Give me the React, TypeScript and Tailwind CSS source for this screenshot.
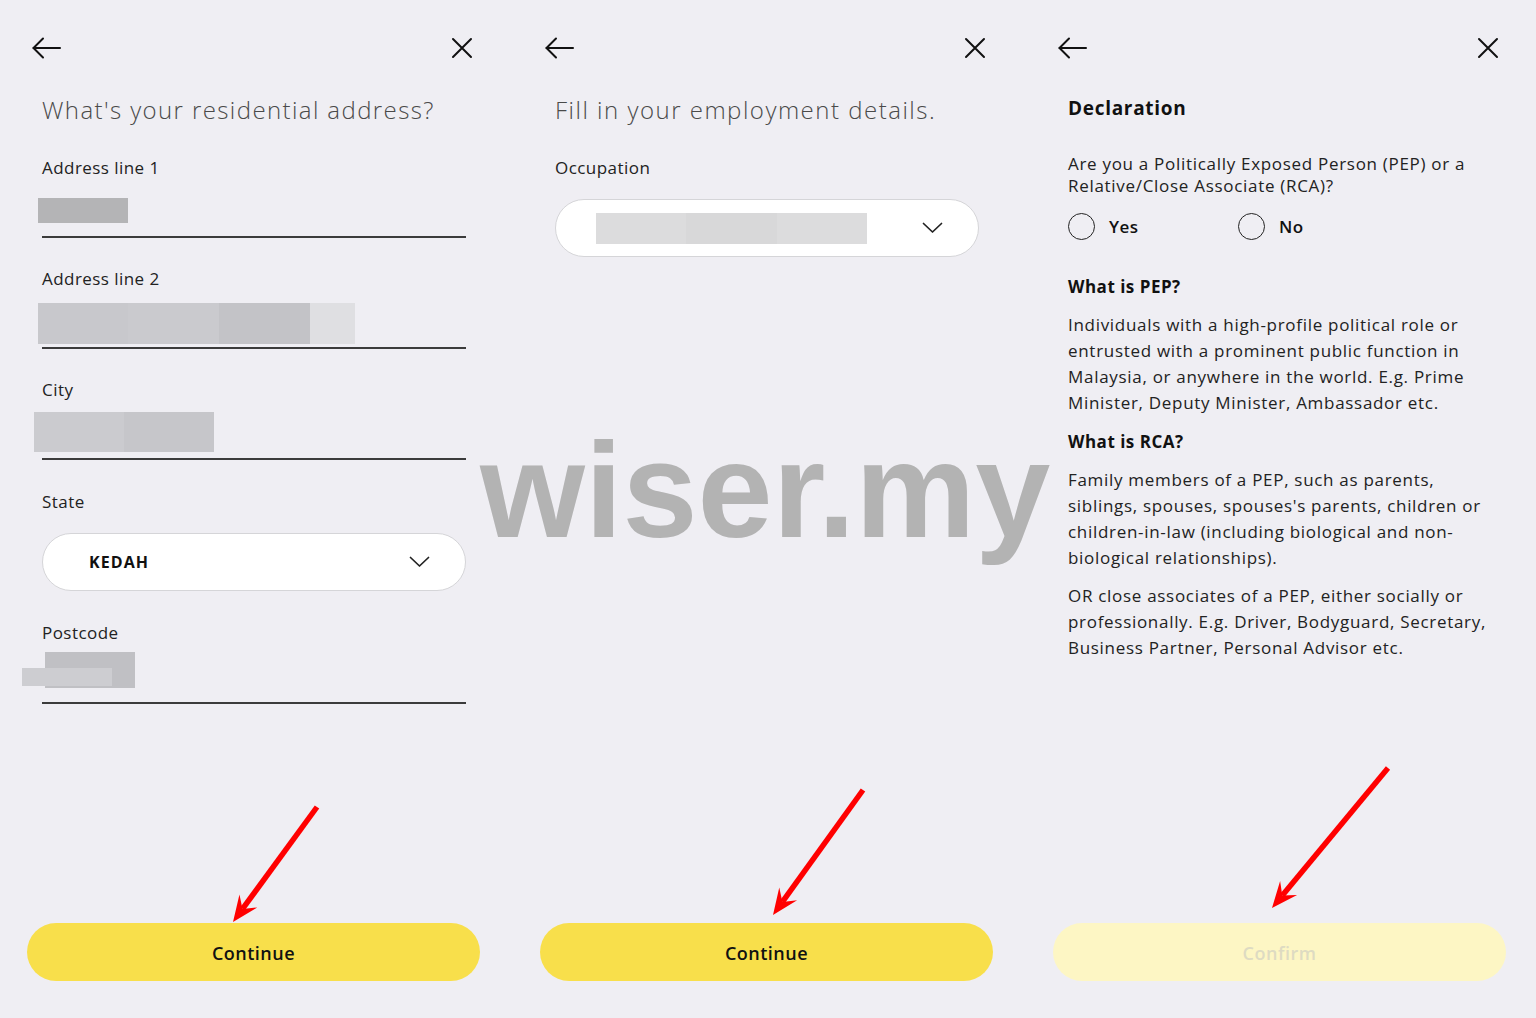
import type { ReactNode } from "react";

const font = "font-['Open_Sans',sans-serif]";

function BackIcon() {
  return (
    <svg width="30" height="22" viewBox="0 0 30 22" fill="none" stroke="#111" strokeWidth="2" strokeLinecap="round" strokeLinejoin="round">
      <path d="M1.5 11H28" />
      <path d="M11 1.5 1.5 11l9.5 9.5" />
    </svg>
  );
}

function CloseIcon() {
  return (
    <svg width="22" height="22" viewBox="0 0 22 22" fill="none" stroke="#111" strokeWidth="2" strokeLinecap="round">
      <path d="M2 2l18 18M20 2 2 20" />
    </svg>
  );
}

function Chevron() {
  return (
    <svg width="21" height="12" viewBox="0 0 21 12" fill="none" stroke="#222" strokeWidth="1.7" strokeLinecap="round" strokeLinejoin="round">
      <path d="M1.5 1.5 10.5 10l9-8.5" />
    </svg>
  );
}

function Header() {
  return (
    <div className="ml-[32px] mt-[37px] flex h-[22px] w-[441px] items-center justify-between">
      <BackIcon />
      <CloseIcon />
    </div>
  );
}

function Screen({ width, children, label, disabled }: { width: string; children: ReactNode; label: string; disabled?: boolean }) {
  return (
    <div className={`flex h-[1018px] flex-col ${width}`}>
      <Header />
      {children}
      <div className="mt-auto mb-[37px] ml-[27px]">
        <button
          type="button"
          className={`flex h-[58px] w-[453px] items-center justify-center rounded-full pt-[2px] text-[18px] font-semibold tracking-[0.5px] ${
            disabled ? "bg-[#fdf6c4] text-[#dedbc2]" : "bg-[#f8df4b] text-[#111]"
          }`}
        >
          {label}
        </button>
      </div>
    </div>
  );
}

// pixelated redaction blocks
function Mosaic({ cells, className }: { cells: [string, string][]; className: string }) {
  return (
    <div className={`absolute flex ${className}`}>
      {cells.map(([w, c], i) => (
        <div key={i} className={`h-full ${w} ${c}`} />
      ))}
    </div>
  );
}

function Field({ label, children, className = "", h = "h-[59px]" }: { label: string; children?: ReactNode; className?: string; h?: string }) {
  return (
    <div className={`ml-[42px] w-[424px] ${className}`}>
      <div className="h-[22px] text-[17px] leading-[22px] tracking-[0.45px] text-[#222]">{label}</div>
      <div className={`relative border-b-2 border-[#3b3b3b] ${h}`}>{children}</div>
    </div>
  );
}

function Pill({ children }: { children: ReactNode }) {
  return (
    <div className="relative flex h-[58px] w-[424px] items-center justify-between rounded-full border border-[#d5d5d8] bg-white pl-[46px] pr-[35px]">
      {children}
      <Chevron />
    </div>
  );
}

function Radio({ label }: { label: string }) {
  return (
    <div className="flex w-[170px] items-center gap-[14px]">
      <div className="h-[27px] w-[27px] rounded-full border-[1.5px] border-[#222]" />
      <span className="text-[17px] font-semibold tracking-[0.4px] text-[#111]">{label}</span>
    </div>
  );
}

function Arrow({ x1, y1, x2, y2 }: { x1: number; y1: number; x2: number; y2: number }) {
  const len = Math.hypot(x2 - x1, y2 - y1);
  const dx = (x2 - x1) / len;
  const dy = (y2 - y1) / len;
  const nx = -dy;
  const ny = dx;
  const L = 26;
  const W = 11;
  const bx = x2 - dx * L;
  const by = y2 - dy * L;
  const mx = x2 - dx * L * 0.62;
  const my = y2 - dy * L * 0.62;
  const pts = `${x2},${y2} ${bx + nx * W},${by + ny * W} ${mx},${my} ${bx - nx * W},${by - ny * W}`;
  return (
    <g>
      <line x1={x1} y1={y1} x2={mx} y2={my} stroke="#ff0000" strokeWidth="5.5" />
      <polygon points={pts} fill="#ff0000" />
    </g>
  );
}

export default function App() {
  return (
    <div className={`relative flex h-[1018px] w-[1536px] overflow-hidden bg-[#efeef3] ${font}`}>
      {/* Residential address */}
      <Screen width="w-[513px]" label="Continue">
        <h1 className="ml-[42px] mt-[35px] h-[32px] text-[24px] font-light leading-[32px] tracking-[1.4px] text-[#4a4a4a]">
          What's your residential address?
        </h1>
        <Field label="Address line 1" className="mt-[31px]">
          <Mosaic className="left-[-4px] top-[19px] h-[25px]" cells={[["w-[90px]", "bg-[#b4b4b6]"]]} />
        </Field>
        <Field label="Address line 2" className="mt-[30px]">
          <Mosaic
            className="left-[-4px] top-[13px] h-[41px]"
            cells={[
              ["w-[90px]", "bg-[#c8c8cc]"],
              ["w-[91px]", "bg-[#cacace]"],
              ["w-[91px]", "bg-[#c3c3c7]"],
              ["w-[45px]", "bg-[#dfdfe2]"],
            ]}
          />
        </Field>
        <Field label="City" className="mt-[30px]">
          <Mosaic
            className="left-[-8px] top-[11px] h-[40px]"
            cells={[
              ["w-[90px]", "bg-[#cbcbcf]"],
              ["w-[90px]", "bg-[#c6c6ca]"],
            ]}
          />
        </Field>
        <div className="ml-[42px] mt-[31px]">
          <div className="h-[22px] text-[17px] leading-[22px] tracking-[0.45px] text-[#222]">State</div>
          <div className="mt-[20px]">
            <Pill>
              <span className="text-[16px] font-bold tracking-[1.1px] text-[#111]">KEDAH</span>
            </Pill>
          </div>
        </div>
        <Field label="Postcode" className="mt-[31px]" h="h-[60px]">
          <Mosaic className="left-[3px] top-[8px] h-[36px]" cells={[["w-[90px]", "bg-[#c0c0c4]"]]} />
          <Mosaic className="left-[-20px] top-[24px] h-[18px]" cells={[["w-[90px]", "bg-[#cdcdd1]"]]} />
        </Field>
      </Screen>

      {/* Employment */}
      <Screen width="w-[513px]" label="Continue">
        <h1 className="ml-[42px] mt-[35px] h-[32px] text-[24px] font-light leading-[32px] tracking-[1.5px] text-[#4a4a4a]">
          Fill in your employment details.
        </h1>
        <div className="ml-[42px] mt-[31px]">
          <div className="h-[22px] text-[17px] leading-[22px] tracking-[0.45px] text-[#222]">Occupation</div>
          <div className="mt-[20px]">
            <Pill>
              <div className="-ml-[6px] flex h-[31px]">
                <div className="w-[90px] bg-[#dcdcdd]" />
                <div className="w-[91px] bg-[#d8d8d9]" />
                <div className="w-[90px] bg-[#dcdcdd]" />
              </div>
            </Pill>
          </div>
        </div>
      </Screen>

      {/* Declaration */}
      <Screen width="w-[510px]" label="Confirm" disabled>
        <div className="ml-[42px] mt-[37px] text-[17px] tracking-[0.7px] text-[#222]">
          <h2 className="h-[24px] text-[19px] font-bold leading-[24px] tracking-[0.7px] text-[#111]">Declaration</h2>
          <p className="mt-[33px] leading-[22px]">
            Are you a Politically Exposed Person (PEP) or a
            <br />
            Relative/Close Associate (RCA)?
          </p>
          <div className="mt-[16px] flex">
            <Radio label="Yes" />
            <Radio label="No" />
          </div>
          <h3 className="mt-[36px] text-[17px] font-bold leading-[22px] tracking-[0.5px] text-[#111]">What is PEP?</h3>
          <p className="mt-[14px] leading-[26px]">
            Individuals with a high-profile political role or
            <br />
            entrusted with a prominent public function in
            <br />
            Malaysia, or anywhere in the world. E.g. Prime
            <br />
            Minister, Deputy Minister, Ambassador etc.
          </p>
          <h3 className="mt-[15px] text-[17px] font-bold leading-[22px] tracking-[0.5px] text-[#111]">What is RCA?</h3>
          <p className="mt-[14px] leading-[26px]">
            Family members of a PEP, such as parents,
            <br />
            siblings, spouses, spouses's parents, children or
            <br />
            children-in-law (including biological and non-
            <br />
            biological relationships).
          </p>
          <p className="mt-[12px] leading-[26px]">
            OR close associates of a PEP, either socially or
            <br />
            professionally. E.g. Driver, Bodyguard, Secretary,
            <br />
            Business Partner, Personal Advisor etc.
          </p>
        </div>
      </Screen>

      {/* watermark */}
      <div className="pointer-events-none absolute left-[480px] top-[423px] font-['Liberation_Sans',Arial,sans-serif] text-[135px] font-bold leading-none text-[#b3b3b3]">
        wiser.my
      </div>

      {/* annotation arrows */}
      <svg className="pointer-events-none absolute inset-0" width="1536" height="1018">
        <Arrow x1={317} y1={807} x2={233} y2={922} />
        <Arrow x1={863} y1={790} x2={773} y2={915} />
        <Arrow x1={1388} y1={768} x2={1272} y2={908} />
      </svg>
    </div>
  );
}
